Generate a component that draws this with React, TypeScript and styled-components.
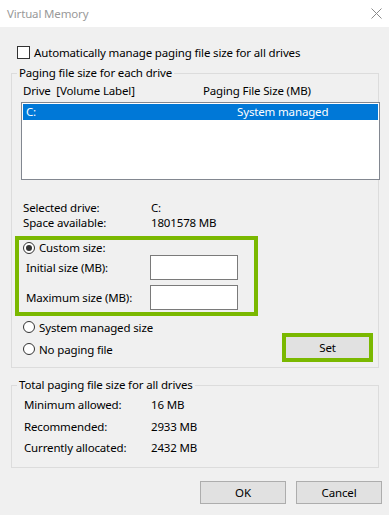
import React from 'react'
import styled, { createGlobalStyle } from 'styled-components'

const GlobalStyle = createGlobalStyle`
  html, body {
    margin: 0;
    padding: 0;
    background: #f0f0f0;
  }
  body {
    font-family: "Noto Sans", "Liberation Sans", sans-serif;
    font-size: 11.5px;
    letter-spacing: -0.15px;
    color: #000;
  }
`

const Window = styled.div`
  width: 389px;
  height: 515px;
  background: #f0f0f0;
  display: flex;
  flex-direction: column;
  overflow: hidden;
`

const TitleBar = styled.div`
  height: 27px;
  flex: none;
  background: #fff;
  display: flex;
  align-items: center;
  justify-content: space-between;
  padding: 0 7px 0 7px;
  box-sizing: border-box;
`

const Title = styled.span`
  color: #999;
`

const Content = styled.div`
  display: flex;
  flex-direction: column;
  padding: 0 10px 0 11px;
`

const CheckRow = styled.label`
  display: flex;
  align-items: center;
  gap: 4px;
  height: 13px;
  margin: 19px 0 0 6px;
  line-height: 13px;
`

const CheckBox = styled.span`
  width: 13px;
  height: 13px;
  box-sizing: border-box;
  border: 1px solid #333;
  background: #fff;
  flex: none;
`

const Group = styled.fieldset<{ $top: number }>`
  margin: ${(p) => p.$top}px 0 0 0;
  padding: 0;
  min-width: 0;
  border: 1px solid #dcdcdc;
  display: flex;
  flex-direction: column;
`

const Legend = styled.legend`
  margin-left: 5px;
  padding: 0 2px;
  line-height: 16px;
`

const Columns = styled.div<{ $first: number }>`
  display: grid;
  grid-template-columns: ${(p) => p.$first}px 1fr;
`

const ColumnHeader = styled(Columns)`
  margin: 2px 0 0 11px;
  line-height: 16px;
`

const ListBox = styled.div`
  height: 78px;
  box-sizing: border-box;
  margin: 3px -2px 0 9px;
  border: 1px solid #828790;
  background: #fff;
  padding: 1px;
`

const ListRow = styled(Columns)<{ $selected?: boolean }>`
  height: 16px;
  line-height: 16px;
  padding-left: 3px;
  background: ${(p) => (p.$selected ? '#0078d7' : 'transparent')};
  color: ${(p) => (p.$selected ? '#fff' : '#000')};
`

const InfoList = styled.div`
  margin: 20px 0 0 11px;
  line-height: 15px;
`

const Highlight = styled.div`
  width: 243px;
  box-sizing: border-box;
  margin: 6px 0 0 3px;
  border: 4px solid #7ab800;
  padding: 0 0 2px 4px;
  display: flex;
  flex-direction: column;
`

const RadioRow = styled.label<{ $height?: number }>`
  display: flex;
  align-items: center;
  gap: 4px;
  height: ${(p) => p.$height ?? 16}px;
`

const RadioCircle = styled.span<{ $checked?: boolean }>`
  width: 12px;
  height: 12px;
  box-sizing: border-box;
  border: 1px solid #333;
  border-radius: 50%;
  background: #fff;
  flex: none;
  display: flex;
  align-items: center;
  justify-content: center;
  &::after {
    content: '';
    width: 6px;
    height: 6px;
    border-radius: 50%;
    background: ${(p) => (p.$checked ? '#333' : 'transparent')};
  }
`

const FieldRow = styled.div`
  display: grid;
  grid-template-columns: 124px 88px;
  align-items: center;
  padding-left: 3px;
  margin-top: 5px;
`

const FirstFieldRow = styled(FieldRow)`
  margin-top: 0;
`

const TextBox = styled.div`
  height: 25px;
  box-sizing: border-box;
  border: 1px solid #7a7a7a;
  background: #fff;
`

const BottomRow = styled.div`
  display: flex;
  align-items: flex-start;
  justify-content: space-between;
  margin: 3px 5px 5px 11px;
`

const RadioColumn = styled.div`
  display: flex;
  flex-direction: column;
  gap: 6px;
`

const SetFrame = styled.div`
  margin-top: 14px;
  border: 4px solid #7ab800;
  display: flex;
`

const Button = styled.button<{ $width: number; $height: number }>`
  width: ${(p) => p.$width}px;
  height: ${(p) => p.$height}px;
  box-sizing: border-box;
  border: 1px solid #adadad;
  background: #e1e1e1;
  font-family: inherit;
  font-size: 11.5px;
  letter-spacing: -0.15px;
  color: #000;
  padding: 0;
`

const SetButton = styled(Button)`
  border-color: #e1e1e1;
`

const Totals = styled.div`
  margin: 1px 0 8px 12px;
  line-height: 21.5px;
`

const Footer = styled.div`
  display: flex;
  justify-content: flex-end;
  gap: 10px;
  margin: 13px -3px 0 0;
`

const CloseIcon = () => (
  <svg width="11" height="11" viewBox="0 0 11 11">
    <path d="M0.5 0.5 L10.5 10.5 M10.5 0.5 L0.5 10.5" stroke="#8a8a8a" strokeWidth="1" />
  </svg>
)

const Radio = ({ label, checked, height }: { label: string; checked?: boolean; height?: number }) => (
  <RadioRow $height={height}>
    <RadioCircle $checked={checked} />
    {label}
  </RadioRow>
)

const totals = [
  ['Minimum allowed:', '16 MB'],
  ['Recommended:', '2933 MB'],
  ['Currently allocated:', '2432 MB'],
]

export default function App() {
  return (
    <Window>
      <GlobalStyle />
      <TitleBar>
        <Title>Virtual Memory</Title>
        <CloseIcon />
      </TitleBar>
      <Content>
        <CheckRow>
          <CheckBox />
          Automatically manage paging file size for all drives
        </CheckRow>

        <Group $top={6}>
          <Legend>Paging file size for each drive</Legend>
          <ColumnHeader $first={180}>
            <span>Drive&nbsp;&nbsp;[Volume Label]</span>
            <span>Paging File Size (MB)</span>
          </ColumnHeader>
          <ListBox>
            <ListRow $first={211} $selected>
              <span>C:</span>
              <span>System managed</span>
            </ListRow>
          </ListBox>

          <InfoList>
            <Columns $first={128}>
              <span>Selected drive:</span>
              <span>C:</span>
            </Columns>
            <Columns $first={128}>
              <span>Space available:</span>
              <span>1801578 MB</span>
            </Columns>
          </InfoList>

          <Highlight>
            <Radio label="Custom size:" checked height={15} />
            <FirstFieldRow>
              <span>Initial size (MB):</span>
              <TextBox />
            </FirstFieldRow>
            <FieldRow>
              <span>Maximum size (MB):</span>
              <TextBox />
            </FieldRow>
          </Highlight>

          <BottomRow>
            <RadioColumn>
              <Radio label="System managed size" />
              <Radio label="No paging file" />
            </RadioColumn>
            <SetFrame>
              <SetButton $width={83} $height={21}>Set</SetButton>
            </SetFrame>
          </BottomRow>
        </Group>

        <Group $top={9}>
          <Legend>Total paging file size for all drives</Legend>
          <Totals>
            {totals.map(([label, value]) => (
              <Columns $first={127} key={label}>
                <span>{label}</span>
                <span>{value}</span>
              </Columns>
            ))}
          </Totals>
        </Group>

        <Footer>
          <Button $width={86} $height={23}>OK</Button>
          <Button $width={86} $height={23}>Cancel</Button>
        </Footer>
      </Content>
    </Window>
  )
}
